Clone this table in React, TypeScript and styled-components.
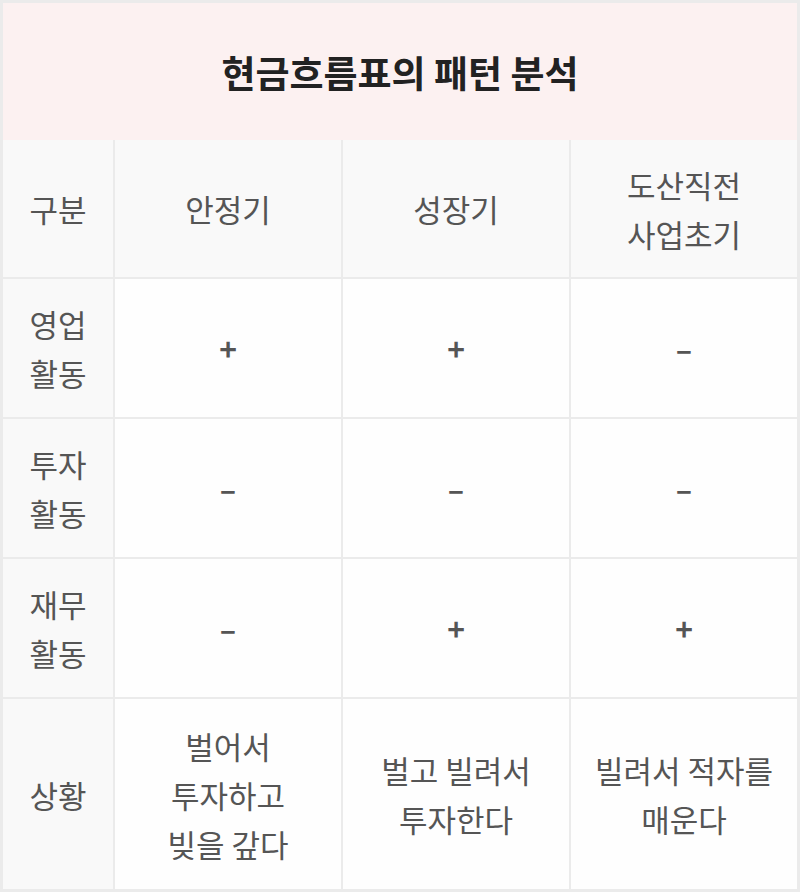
import React from "react";
import styled, { createGlobalStyle } from "styled-components";

const GlobalStyle = createGlobalStyle`
  html, body {
    margin: 0;
    padding: 0;
    background: #ffffff;
  }
  body {
    font-family: "Noto Sans CJK KR", "Noto Sans", sans-serif;
  }
`;

const Frame = styled.div`
  width: 800px;
  box-sizing: border-box;
  padding: 3px;
  background: #ebebeb;
`;

const Title = styled.h1`
  margin: 0;
  height: 137px;
  display: flex;
  align-items: center;
  justify-content: center;
  background: #fcf1f1;
  color: #222222;
  font-size: 37px;
  font-weight: 700;
`;

const Grid = styled.div`
  display: grid;
  grid-template-columns: 110px repeat(3, 1fr);
  grid-template-rows: 137px repeat(3, 138px) 190px;
  gap: 2px;
`;

const Cell = styled.div<{ $head?: boolean }>`
  display: flex;
  align-items: center;
  justify-content: center;
  text-align: center;
  background: ${(p) => (p.$head ? "#f9f9f9" : "#fefefe")};
  color: #555555;
  font-size: 31px;
  line-height: 49px;
  white-space: pre-line;
`;

const Sign = styled.span`
  font-size: 30px;
  font-weight: 700;
  color: #555555;
`;

const columns = ["안정기", "성장기", "도산직전\n사업초기"];

const rows: { label: string; values: string[] }[] = [
  { label: "영업\n활동", values: ["+", "+", "–"] },
  { label: "투자\n활동", values: ["–", "–", "–"] },
  { label: "재무\n활동", values: ["–", "+", "+"] },
];

const situations = ["벌어서\n투자하고\n빚을 갚다", "벌고 빌려서\n투자한다", "빌려서 적자를\n매운다"];

const App: React.FC = () => {
  return (
    <>
      <GlobalStyle />
      <Frame>
        <Title>현금흐름표의 패턴 분석</Title>
        <Grid>
          <Cell $head>구분</Cell>
          {columns.map((c) => (
            <Cell $head key={c}>
              {c}
            </Cell>
          ))}
          {rows.map((r) => (
            <React.Fragment key={r.label}>
              <Cell $head>{r.label}</Cell>
              {r.values.map((v, i) => (
                <Cell key={i}>
                  <Sign>{v}</Sign>
                </Cell>
              ))}
            </React.Fragment>
          ))}
          <Cell $head>상황</Cell>
          {situations.map((s) => (
            <Cell key={s}>{s}</Cell>
          ))}
        </Grid>
      </Frame>
    </>
  );
};

export default App;
